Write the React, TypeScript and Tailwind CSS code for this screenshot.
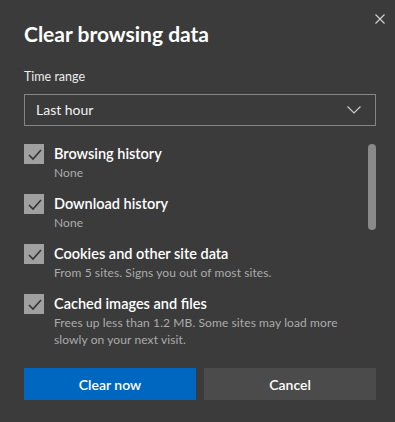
import { useState } from "react";

const ITEMS = [
  { id: "history", label: "Browsing history", note: "None" },
  { id: "downloads", label: "Download history", note: "None" },
  {
    id: "cookies",
    label: "Cookies and other site data",
    note: "From 5 sites. Signs you out of most sites.",
  },
  {
    id: "cache",
    label: "Cached images and files",
    note: "Frees up less than 1.2 MB. Some sites may load more slowly on your next visit.",
  },
];

export default function App() {
  const [checked, setChecked] = useState<Record<string, boolean>>({
    history: true,
    downloads: true,
    cookies: true,
    cache: true,
  });

  return (
    <div
      className="relative h-[422px] w-[395px] overflow-hidden bg-[#3b3b3b] text-white"
      style={{ fontFamily: 'Lato, "Open Sans", sans-serif' }}
    >
      {/* close */}
      <button className="absolute left-[375px] top-[14px] h-[10px] w-[10px]">
        <svg viewBox="0 0 10 10" className="h-[10px] w-[10px]">
          <path d="M0.5 0.5 L9.5 9.5 M9.5 0.5 L0.5 9.5" stroke="#d6d6d6" strokeWidth="1.1" fill="none" />
        </svg>
      </button>

      <div className="ml-6 w-[352px] pt-[20px]">
        <h1 className="text-[21px] leading-[28px] font-bold">Clear browsing data</h1>

        <p className="mt-[20px] text-[12.5px] leading-[18px] text-[#ececec]">Time range</p>

        <div className="mt-[8px] flex h-[32px] items-center justify-between border border-[#858585] pl-[11px] pr-[14px]">
          <span className="text-[14px] leading-[20px] text-[#f2f2f2]">Last hour</span>
          <svg viewBox="0 0 14 8" className="h-[8px] w-[14px]">
            <path d="M0.5 0.5 L7 7 L13.5 0.5" stroke="#cfcfcf" strokeWidth="1.1" fill="none" />
          </svg>
        </div>

        {/* scroll list */}
        <div className="relative mt-[18px] h-[202px] overflow-hidden">
          <div className="flex flex-col gap-[13px] pr-[16px]">
            {ITEMS.map((it) => (
              <label key={it.id} className="flex cursor-pointer gap-[10px]">
                <span
                  onClick={() => setChecked((c) => ({ ...c, [it.id]: !c[it.id] }))}
                  className={`flex h-[20px] w-[20px] shrink-0 items-center justify-center ${
                    checked[it.id] ? "bg-[#a0a0a0]" : "border border-[#a0a0a0]"
                  }`}
                >
                  {checked[it.id] && (
                    <svg viewBox="0 0 20 20" className="h-[20px] w-[20px]">
                      <path d="M5 11 L9 15 L17 6" stroke="#333333" strokeWidth="1.6" fill="none" />
                    </svg>
                  )}
                </span>
                <span className="flex flex-col">
                  <span className="text-[14.5px] leading-[20px] font-semibold">{it.label}</span>
                  <span className="w-[284px] text-[12px] leading-[17px] text-[#ababab] tracking-[0.1px]">
                    {it.note}
                  </span>
                </span>
              </label>
            ))}
          </div>
          <div className="absolute right-0 top-0 h-[86px] w-[8px] rounded-full bg-[#8a8a8a]" />
        </div>

        <div className="mt-[22px] flex gap-2">
          <button className="h-[32px] flex-1 bg-[#0067c0] text-[14px] font-semibold text-white">
            Clear now
          </button>
          <button className="h-[32px] flex-1 bg-[#4b4b4b] text-[14px] font-semibold text-white">
            Cancel
          </button>
        </div>
      </div>
    </div>
  );
}
